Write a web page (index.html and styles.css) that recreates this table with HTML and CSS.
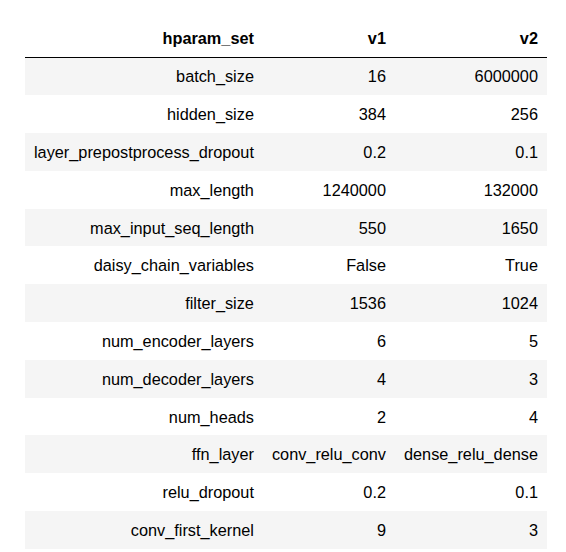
FILE: index.html
```html
<!DOCTYPE html>
<html>
<head>
<meta charset="utf-8">
<link rel="stylesheet" href="styles.css">
</head>
<body>
<table class="df">
  <thead>
    <tr><th>hparam_set</th><th>v1</th><th>v2</th></tr>
  </thead>
  <tbody>
    <tr><td>batch_size</td><td>16</td><td>6000000</td></tr>
    <tr><td>hidden_size</td><td>384</td><td>256</td></tr>
    <tr><td>layer_prepostprocess_dropout</td><td>0.2</td><td>0.1</td></tr>
    <tr><td>max_length</td><td>1240000</td><td>132000</td></tr>
    <tr><td>max_input_seq_length</td><td>550</td><td>1650</td></tr>
    <tr><td>daisy_chain_variables</td><td>False</td><td>True</td></tr>
    <tr><td>filter_size</td><td>1536</td><td>1024</td></tr>
    <tr><td>num_encoder_layers</td><td>6</td><td>5</td></tr>
    <tr><td>num_decoder_layers</td><td>4</td><td>3</td></tr>
    <tr><td>num_heads</td><td>2</td><td>4</td></tr>
    <tr><td>ffn_layer</td><td>conv_relu_conv</td><td>dense_relu_dense</td></tr>
    <tr><td>relu_dropout</td><td>0.2</td><td>0.1</td></tr>
    <tr><td>conv_first_kernel</td><td>9</td><td>3</td></tr>
  </tbody>
</table>
</body>
</html>
```
FILE: styles.css
```css
html, body {
  margin: 0;
  padding: 0;
  background: #fff;
}
body {
  padding: 19px 0 0 25px;
  font-family: "Liberation Sans", Arial, sans-serif;
  font-size: 16.3px;
  color: #000;
}
.df {
  border-collapse: collapse;
  border-spacing: 0;
}
.df th,
.df td {
  text-align: right;
  padding: 0 9px;
  height: 37.8px;
  line-height: 22px;
  white-space: nowrap;
  vertical-align: middle;
}
.df th {
  font-weight: bold;
  border-bottom: 1px solid #000;
  height: 37.5px;
}
.df tbody tr:nth-child(odd) {
  background: #f5f5f5;
}
```
